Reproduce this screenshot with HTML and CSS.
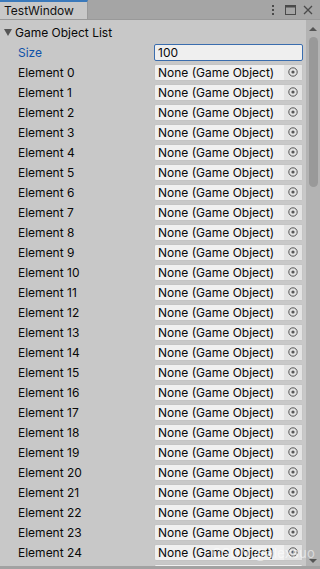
FILE: index.html
```html
<!DOCTYPE html>
<html>
<head>
<meta charset="utf-8">
<link rel="stylesheet" href="styles.css">
</head>
<body>
<div class="window">
  <div class="tabbar">
    <div class="tab">TestWindow</div>
    <div class="tab-tools">
      <svg class="tool" width="4" height="10" viewBox="0 0 4 10"><rect x="1" y="0" width="2" height="2" fill="#4a4a4a"/><rect x="1" y="4" width="2" height="2" fill="#4a4a4a"/><rect x="1" y="8" width="2" height="2" fill="#4a4a4a"/></svg>
      <svg class="tool" width="11" height="10" viewBox="0 0 11 10"><rect x="0.5" y="0.5" width="10" height="9" fill="none" stroke="#4a4a4a"/><rect x="0.5" y="0.5" width="10" height="2" fill="#4a4a4a"/></svg>
      <svg class="tool" width="10" height="10" viewBox="0 0 10 10"><path d="M1 1L9 9M9 1L1 9" stroke="#4a4a4a" stroke-width="1.3"/></svg>
    </div>
  </div>
  <div class="body">
    <div class="content">
      <div class="row foldout"><span class="arrow"></span>Game Object List</div>
      <div class="row"><span class="label size-label">Size</span><div class="field int-field">100</div></div>
      <div id="list"></div>
      <div class="row"><span class="label"></span><div class="field obj-field"></div></div>
    </div>
    <div class="scrollbar">
      <span class="sb-up"></span>
      <div class="sb-track"><div class="sb-thumb"></div></div>
      <span class="sb-down"></span>
    </div>
  </div>
  <div class="bottom-edge"></div>
  <div class="watermark">CSDN @alexsuo</div>
</div>
<script>
var list = document.getElementById('list');
var html = '';
for (var i = 0; i < 25; i++) {
  html += '<div class="row"><span class="label">Element ' + i + '</span><div class="field obj-field"><span class="obj-text">None (Game Object)</span><span class="picker"><svg width="10" height="10" viewBox="0 0 10 10"><circle cx="5" cy="5" r="4.2" fill="none" stroke="#555" stroke-width="1"/><circle cx="5" cy="5" r="1.6" fill="#555"/></svg></span></div></div>';
}
list.innerHTML = html;
</script>
</body>
</html>
```
FILE: styles.css
```css
* { box-sizing: border-box; }
html, body { margin: 0; padding: 0; }
body {
  width: 320px;
  height: 569px;
  overflow: hidden;
  font-family: Inter, "Noto Sans", "Liberation Sans", sans-serif;
  font-size: 12px;
  color: #090909;
  background: #c8c8c8;
}
.window { position: relative; width: 320px; height: 569px; overflow: hidden; display: flex; flex-direction: column; }
.tabbar {
  height: 20px;
  flex: none;
  background: #a5a5a5;
  display: flex;
  align-items: stretch;
  justify-content: space-between;
  border-bottom: 1px solid #999;
}
.tab {
  width: 88px;
  background: #c8c8c8;
  border-top: 2px solid #3a79bb;
  border-right: 1px solid #999;
  padding-left: 4px;
  line-height: 17px;
  font-size: 12px;
  color: #111;
}
.tab-tools { display: flex; align-items: center; gap: 7px; padding-right: 7px; padding-top: 1px; }
.tool { display: block; }
.tab-tools .tool:first-child { margin-right: 3px; }
.body { flex: 1; display: flex; min-height: 0; }
.content { flex: 1; padding-top: 2px; overflow: hidden; }
.row { height: 20px; display: flex; align-items: center; padding-left: 18px; padding-right: 3px; }
.foldout { padding-left: 4px; }
.arrow {
  width: 0; height: 0;
  border-left: 4px solid transparent;
  border-right: 4px solid transparent;
  border-top: 7px solid #555;
  margin-right: 3px;
  margin-top: 1px;
}
.label { width: 136px; flex: none; }
.size-label { color: #0f52a8; }
.field {
  flex: 1;
  height: 17px;
  background: #f0f0f0;
  border: 1px solid #b3b3b3;
  border-radius: 2px;
  display: flex;
  align-items: center;
  padding-left: 3px;
}
.int-field { border-color: #3a6dae; background: #efefef; }
.obj-field { padding-left: 0; border-color: #c4c4c4; }
.obj-text { flex: 1; padding-left: 3px; white-space: nowrap; overflow: hidden; }
.picker {
  width: 18px;
  align-self: stretch;
  background: #e3e3e3;
  display: flex;
  align-items: center;
  justify-content: center;
  border-radius: 0 2px 2px 0;
}
.picker svg { display: block; }
.scrollbar {
  width: 14px;
  flex: none;
  background: #b3b3b3;
  display: flex;
  flex-direction: column;
  align-items: center;
}
.sb-up, .sb-down { width: 0; height: 0; border-left: 4px solid transparent; border-right: 4px solid transparent; }
.sb-up { border-bottom: 4px solid #555; margin-top: 7px; margin-bottom: 6px; }
.sb-down { border-top: 4px solid #555; margin-top: 5px; margin-bottom: 3px; }
.sb-track { flex: 1; width: 100%; display: flex; justify-content: center; }
.sb-thumb { width: 9px; height: 150px; background: #999999; border-radius: 5px; }
.bottom-edge { height: 3px; flex: none; background: #a2a2a2; }
.watermark {
  position: absolute;
  left: 212px;
  top: 545px;
  font-size: 13px;
  color: rgba(255,255,255,0.55);
  letter-spacing: 0.2px;
}
```
